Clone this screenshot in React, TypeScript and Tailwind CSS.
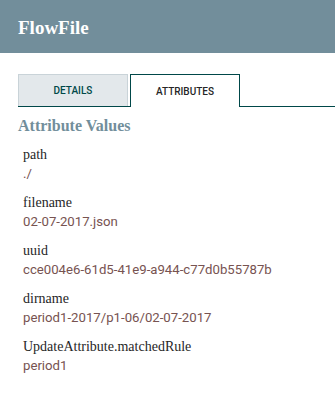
import React from 'react'

const attributes = [
  { name: 'path', value: './' },
  { name: 'filename', value: '02-07-2017.json' },
  { name: 'uuid', value: 'cce004e6-61d5-41e9-a944-c77d0b55787b' },
  { name: 'dirname', value: 'period1-2017/p1-06/02-07-2017' },
  { name: 'UpdateAttribute.matchedRule', value: 'period1' },
]

export default function App() {
  return (
    <div className="w-[335px] h-[400px] bg-white overflow-hidden">
      {/* header */}
      <div className="h-[53px] bg-[#728e9b] flex items-center px-[18px]">
        <h1 className="text-white text-[19px] font-bold font-['Liberation_Serif',serif] leading-none pt-[1px]">
          FlowFile
        </h1>
      </div>

      {/* tabs */}
      <div className="mt-[21px] ml-[18px] flex gap-[2px] h-[33px] border-b border-[#004849] font-['Roboto',sans-serif] font-medium text-[10px]">
        <div className="w-[110px] h-[32px] bg-[#e3e8eb] border border-b-0 border-[#c9d3d8] flex items-center justify-center text-[#004849]">
          DETAILS
        </div>
        <div className="w-[110px] h-[33px] bg-white border border-b-0 border-[#004849] flex items-center justify-center text-[#262626]">
          ATTRIBUTES
        </div>
      </div>

      <div className="px-[18px]">
        <h2 className="mt-[9px] text-[#728e9b] text-[16px] font-bold font-['Liberation_Serif',serif] leading-[20px]">
          Attribute Values
        </h2>

        <div className="pl-[5px] mt-[9px] flex flex-col gap-[9px]">
          {attributes.map((a) => (
            <div key={a.name} className="flex flex-col">
              <div className="text-[#262626] text-[14px] font-['Liberation_Serif',serif] leading-[19px]">
                {a.name}
              </div>
              <div className="text-[#775351] text-[13.2px] font-['Roboto',sans-serif] leading-[20px]">
                {a.value}
              </div>
            </div>
          ))}
        </div>
      </div>
    </div>
  )
}
